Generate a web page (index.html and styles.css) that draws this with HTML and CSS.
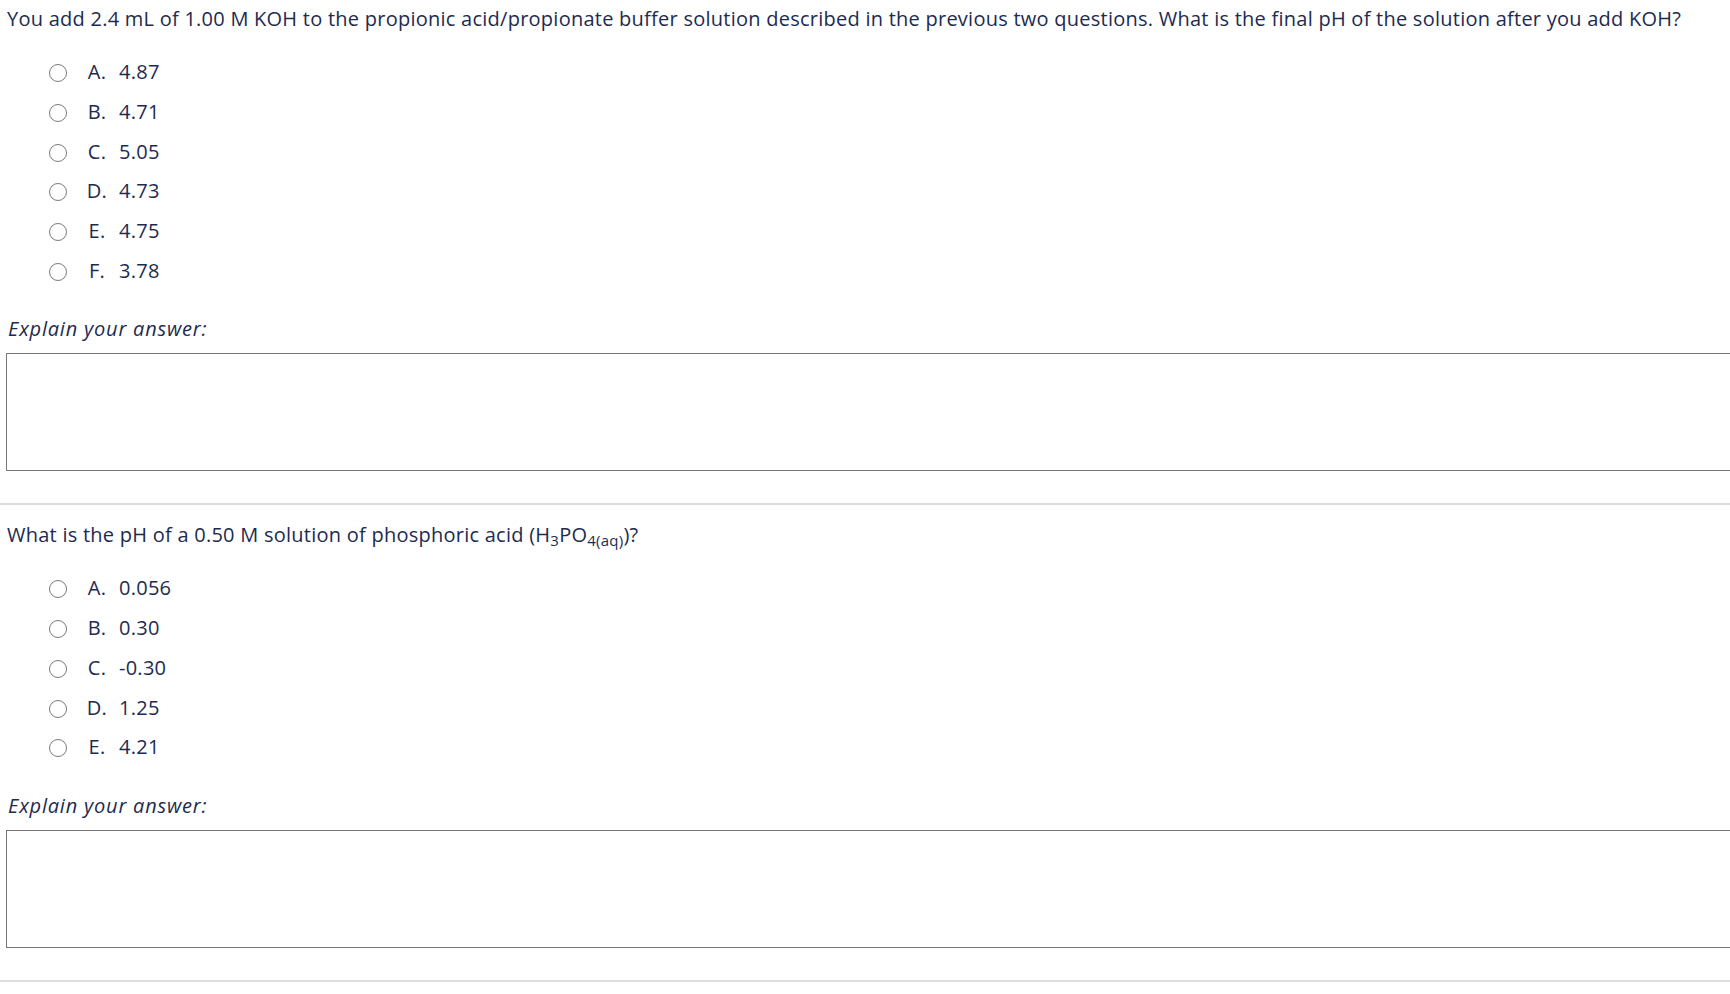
FILE: index.html
```html
<!DOCTYPE html>
<html lang="en">
<head>
<meta charset="utf-8">
<title>Quiz</title>
<link rel="stylesheet" href="styles.css">
</head>
<body>
<div class="page">
  <section class="question">
    <p class="prompt">You add 2.4 mL of 1.00 M KOH to the propionic acid/propionate buffer solution described in the previous two questions. What is the final pH of the solution after you add KOH?</p>
    <ul class="options">
      <li class="option"><span class="radio"></span><span class="letter">A.</span><span class="value">4.87</span></li>
      <li class="option"><span class="radio"></span><span class="letter">B.</span><span class="value">4.71</span></li>
      <li class="option"><span class="radio"></span><span class="letter">C.</span><span class="value">5.05</span></li>
      <li class="option"><span class="radio"></span><span class="letter">D.</span><span class="value">4.73</span></li>
      <li class="option"><span class="radio"></span><span class="letter">E.</span><span class="value">4.75</span></li>
      <li class="option"><span class="radio"></span><span class="letter">F.</span><span class="value">3.78</span></li>
    </ul>
    <p class="explain">Explain your answer:</p>
    <div class="answer-box"></div>
  </section>
  <section class="question">
    <p class="prompt">What is the pH of a 0.50 M solution of phosphoric acid (H<sub>3</sub>PO<sub>4(aq)</sub>)?</p>
    <ul class="options">
      <li class="option"><span class="radio"></span><span class="letter">A.</span><span class="value">0.056</span></li>
      <li class="option"><span class="radio"></span><span class="letter">B.</span><span class="value">0.30</span></li>
      <li class="option"><span class="radio"></span><span class="letter">C.</span><span class="value">-0.30</span></li>
      <li class="option"><span class="radio"></span><span class="letter">D.</span><span class="value">1.25</span></li>
      <li class="option"><span class="radio"></span><span class="letter">E.</span><span class="value">4.21</span></li>
    </ul>
    <p class="explain">Explain your answer:</p>
    <div class="answer-box"></div>
  </section>
</div>
</body>
</html>
```

FILE: styles.css
```css
html, body {
  margin: 0;
  padding: 0;
  background: #ffffff;
  overflow: hidden;
}

.page {
  font-family: "Open Sans", "Liberation Sans", sans-serif;
  font-size: 20px;
  letter-spacing: 0.25px;
  color: #1d2b50;
  width: 1730px;
}

.question {
  border-bottom: 2px solid #dddddd;
  padding-bottom: 32px;
}

.prompt {
  margin: 0;
  padding: 5px 0 0 7px;
  line-height: 28px;
  white-space: nowrap;
}

.prompt sub {
  font-size: 15px;
  vertical-align: -4px;
  line-height: 0;
}

.options {
  list-style: none;
  margin: 0;
  padding: 19px 0 0 0;
}

.option {
  display: flex;
  align-items: center;
  height: 39.7px;
}

.radio {
  box-sizing: border-box;
  width: 18px;
  height: 18px;
  border: 1px solid #7a7a7a;
  border-radius: 50%;
  margin-left: 49px;
  margin-top: 3px;
}

.letter {
  width: 28px;
  margin-left: 16px;
  text-align: center;
}

.value {
  margin-left: 8px;
}

.explain {
  margin: 0;
  padding: 25px 0 0 8px;
  font-style: italic;
  letter-spacing: 0.8px;
  line-height: 28px;
}

.answer-box {
  box-sizing: border-box;
  margin: 10px 0 0 6px;
  width: 1800px;
  height: 118px;
  border: 1px solid #777777;
  border-right: none;
}

.question + .question {
  padding-top: 11px;
}
```
